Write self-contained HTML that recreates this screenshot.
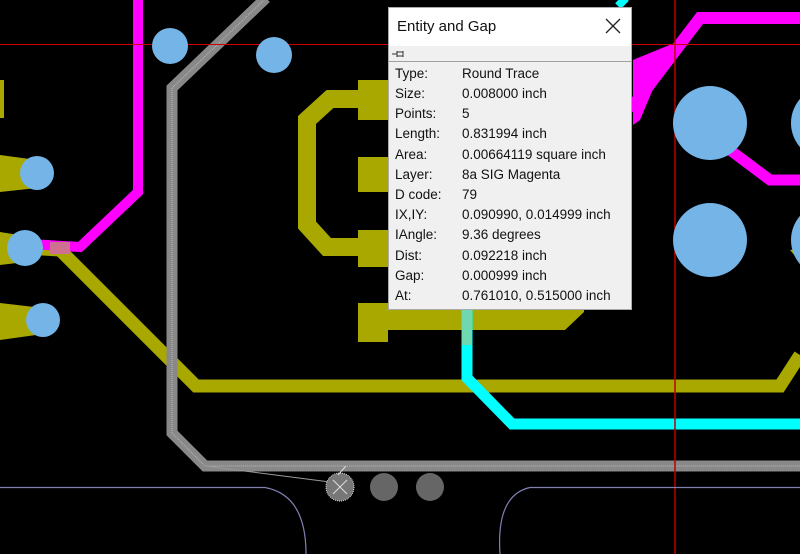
<!DOCTYPE html>
<html><head><meta charset="utf-8"><style>
html,body{margin:0;padding:0;background:#000;width:800px;height:554px;overflow:hidden;position:relative;font-family:"Liberation Sans",sans-serif}
svg.bg{position:absolute;left:0;top:0}
#dlg{position:absolute;left:388px;top:7px;width:244px;height:303px;background:#f0f0f0;border:1px solid #aaa;box-sizing:border-box}
#tb{height:38px;background:#fff;position:relative}
#tb span{position:absolute;left:8px;top:10px;font-size:15px;color:#111}
#x{position:absolute;left:216px;top:10px}
#tool{height:15px;border-bottom:1px solid #a0a0a0;position:relative}
.r{position:absolute;left:6px;font-size:13.5px;color:#111;white-space:nowrap}
.r b{font-weight:normal;position:absolute;left:67px}
</style></head><body>
<svg class="bg" width="800" height="554" viewBox="0 0 800 554">
<g fill="#a8a800" stroke="none">
<rect x="0" y="80" width="4" height="38"/>
<polygon points="0,155 37,160 37,188 0,192"/>
<polygon points="0,232 25,236 25,262 0,265"/>
<polygon points="0,303 43,308 43,334 0,340"/>
<rect x="358" y="80" width="32" height="40"/>
<rect x="358" y="157" width="32" height="35"/>
<rect x="358" y="230" width="32" height="37"/>
<polygon points="358,303 584,303 584,312 565,330 358,330"/>
<rect x="358" y="303" width="30" height="39"/>
</g>
<polyline points="390,99 330,99 307,120 307,225 327,247 390,247" fill="none" stroke="#a8a800" stroke-width="18"/>
<polyline points="25,248 60,250 196,386 780,386 800,355" fill="none" stroke="#a8a800" stroke-width="13"/>
<polygon points="790,250 800,248 800,262" fill="#a8a800"/>
<polyline points="138,0 138,192 80,247 30,244" fill="none" stroke="#f0f" stroke-width="10"/>
<polyline points="630,110 700,18 800,18" fill="none" stroke="#f0f" stroke-width="12"/>
<polygon points="633,60 672,44 640,120 633,125" fill="#f0f"/>
<polyline points="730,150 770,180 800,180" fill="none" stroke="#f0f" stroke-width="11"/>
<rect x="50" y="242" width="20" height="12" fill="#d07090"/>
<polyline points="467,300 467,378 512,424 800,424" fill="none" stroke="#0ff" stroke-width="11"/>
<polyline points="618,6 626,-2" stroke="#0ff" stroke-width="8"/>
<rect x="462" y="305" width="10" height="40" fill="#70d8b0"/>
<polyline points="266,-2 172,88 172,433 205,466 800,466" fill="none" stroke="#888" stroke-width="11"/>
<polyline points="266,-2 172,88 172,433 205,466 800,466" fill="none" stroke="#ddd" stroke-width="1" stroke-dasharray="1,1" opacity=".6"/>
<line x1="205" y1="466" x2="330" y2="482" stroke="#999" stroke-width="1"/>
<circle cx="340" cy="487" r="14" fill="#777" stroke="#ddd" stroke-dasharray="1,1"/>
<path d="M333,480L347,494M347,480L333,494M338,475L346,466" stroke="#ddd"/>
<circle cx="384" cy="487" r="14" fill="#666"/>
<circle cx="430" cy="487" r="14" fill="#666"/>
<line x1="0" y1="44.5" x2="800" y2="44.5" stroke="#c00" stroke-width="1"/>
<line x1="675" y1="0" x2="675" y2="554" stroke="#b00" stroke-width="1.5"/>
<g fill="#74b4e6">
<circle cx="170" cy="46" r="18"/><circle cx="274" cy="55" r="18"/>
<circle cx="37" cy="173" r="17"/><circle cx="25" cy="248" r="18"/><circle cx="43" cy="320" r="17"/>
<circle cx="710" cy="123" r="37"/><circle cx="710" cy="240" r="37"/>
<circle cx="828" cy="123" r="37"/><circle cx="828" cy="240" r="37"/>
</g>
<path d="M0,487.5H265Q306,495 306,554M500,554Q496,495 530,487.5H800" fill="none" stroke="#8080b0" stroke-width="1.2"/>
</svg>
<div id="dlg">
<div id="tb"><span>Entity and Gap</span>
<svg id="x" width="16" height="16" viewBox="0 0 16 16"><path d="M1,1L15,15M15,1L1,15" stroke="#222" stroke-width="1.3"/></svg></div>
<div id="tool"><svg width="14" height="10" style="position:absolute;left:3px;top:3px" viewBox="0 0 14 10"><path d="M0,5H5M5,2V8M5,3H11V7H5M11,2V8" stroke="#333" fill="none"/></svg></div>
<div class="r" style="top:58px">Type:<b>Round Trace</b></div>
<div class="r" style="top:78px">Size:<b>0.008000 inch</b></div>
<div class="r" style="top:98px">Points:<b>5</b></div>
<div class="r" style="top:118px">Length:<b>0.831994 inch</b></div>
<div class="r" style="top:139px">Area:<b>0.00664119 square inch</b></div>
<div class="r" style="top:159px">Layer:<b>8a SIG Magenta</b></div>
<div class="r" style="top:179px">D code:<b>79</b></div>
<div class="r" style="top:199px">IX,IY:<b>0.090990, 0.014999 inch</b></div>
<div class="r" style="top:219px">IAngle:<b>9.36 degrees</b></div>
<div class="r" style="top:240px">Dist:<b>0.092218 inch</b></div>
<div class="r" style="top:260px">Gap:<b>0.000999 inch</b></div>
<div class="r" style="top:280px">At:<b>0.761010, 0.515000 inch</b></div>
</div>
</body></html>
